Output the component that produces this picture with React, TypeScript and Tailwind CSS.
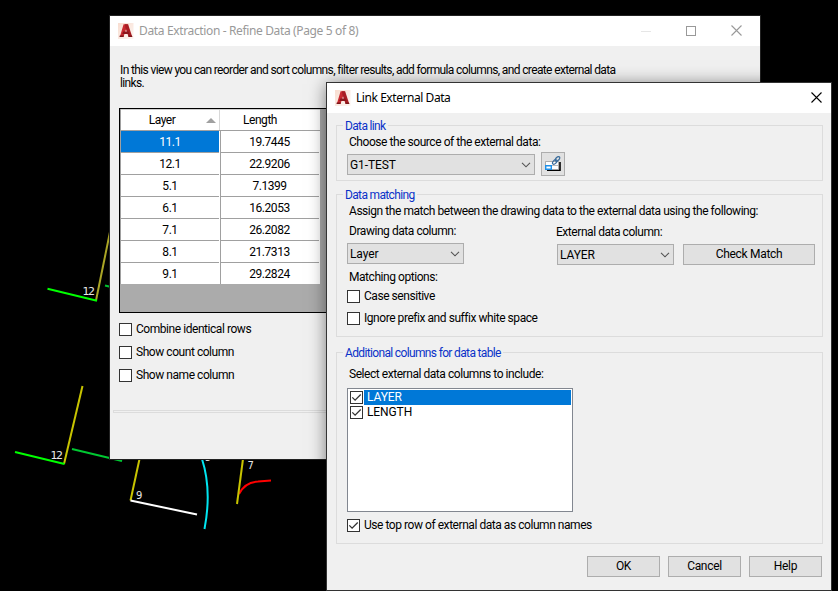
import type { ReactNode } from "react";
import clsx from "clsx";

type Row = { layer: string; length: string };

const rows: Row[] = [
  { layer: "11.1", length: "19.7445" },
  { layer: "12.1", length: "22.9206" },
  { layer: "5.1", length: "7.1399" },
  { layer: "6.1", length: "16.2053" },
  { layer: "7.1", length: "26.2082" },
  { layer: "8.1", length: "21.7313" },
  { layer: "9.1", length: "29.2824" },
];

function AppIcon() {
  return (
    <svg width="16" height="16" viewBox="0 0 16 16" className="shrink-0">
      <defs>
        <linearGradient id="iconBg" x1="0" y1="0" x2="1" y2="1">
          <stop offset="0" stopColor="#f8ddd0" />
          <stop offset="1" stopColor="#fdf5f1" />
        </linearGradient>
      </defs>
      <rect width="15.5" height="16" fill="url(#iconBg)" />
      <path d="M5.6 1.3h4.2L7 9.2 5.5 14H1.8z" fill="#c9292f" />
      <path d="M6.9 1.3h3.2l4.2 12.7h-3.7L7.4 4.6z" fill="#a81c22" />
      <path d="M5.3 8.4h5.2l1 2.7H4.2z" fill="#8c151b" />
      <path d="M1.8 12.4h4.1L5.4 14H1.5zM10.3 12.4h3.5l.6 1.6h-3.7z" fill="#7c1519" />
    </svg>
  );
}

function CloseIcon({ color }: { color: string }) {
  return (
    <svg width="11" height="11" viewBox="0 0 11 11" className="block shrink-0">
      <path d="M.5.5l10 10M10.5.5l-10 10" stroke={color} strokeWidth="1.1" fill="none" />
    </svg>
  );
}

function Label({ children, className }: { children: ReactNode; className?: string }) {
  return <div className={clsx("h-[14px] leading-[15px] whitespace-nowrap", className)}>{children}</div>;
}

function Box({ checked }: { checked?: boolean }) {
  return (
    <span className="block size-[13px] shrink-0 border border-[#333] bg-white">
      {checked && (
        <svg width="11" height="11" viewBox="0 0 11 11" className="block">
          <path d="M1.3 5.4l2.8 2.8 5.6-5.7" stroke="#333" strokeWidth="1.3" fill="none" />
        </svg>
      )}
    </span>
  );
}

function Check({ label, checked, className }: { label: string; checked?: boolean; className?: string }) {
  return (
    <div className={clsx("flex h-[13px] items-center gap-1 leading-[13px] whitespace-nowrap", className)}>
      <Box checked={checked} />
      <span>{label}</span>
    </div>
  );
}

function Select({ value, className }: { value: string; className?: string }) {
  return (
    <div
      className={clsx(
        "flex h-[21px] items-center justify-between border border-[#adadad] bg-[#e1e1e1] pr-[3px] pl-[2px]",
        className,
      )}
    >
      <span className="pt-px leading-[18px] tracking-[-0.1px]">{value}</span>
      <svg width="10" height="6" viewBox="0 0 10 6">
        <path d="M1 .8l4 4 4-4" stroke="#555" strokeWidth="1.1" fill="none" />
      </svg>
    </div>
  );
}

function Button({ children, className }: { children: ReactNode; className?: string }) {
  return (
    <button
      type="button"
      className={clsx("block h-[21px] border border-[#adadad] bg-[#e1e1e1] leading-[19px] tracking-[-0.3px]", className)}
    >
      {children}
    </button>
  );
}

function Group({ title, className, children }: { title: string; className: string; children: ReactNode }) {
  return (
    <fieldset className={clsx("border border-[#dcdcdc] pl-[10px]", className)}>
      <legend className="-ml-[4px] h-[13px] px-[2px] pt-px leading-[13px] tracking-[-0.65px] text-[#0a32c8]">{title}</legend>
      {children}
    </fieldset>
  );
}

// linework of the drawing area behind the dialogs
function Drawing() {
  return (
    <svg width="838" height="591" viewBox="0 0 838 591" fill="none" strokeWidth="2" className="absolute inset-0">
      <path d="M96 300.5L110 232" stroke="#aaa526" />
      <path d="M47.500 288.800L97 300.800" stroke="#00ff00" />
      <path d="M105 285.500L111 287" stroke="#00c030" />
      <path d="M82.500 386L64 464" stroke="#c8c400" />
      <path d="M15 452L64.500 464" stroke="#00ff00" />
      <path d="M72 449L122 461" stroke="#00c832" />
      <path d="M139.500 459L130.500 500.500" stroke="#c8c400" />
      <path d="M130.500 500.500L197 514.500" stroke="#fff" />
      <path d="M202 459Q212 490 204.500 529" stroke="#00e5f0" />
      <path d="M239 494Q245 482 258 481.500L271 480.500" stroke="#f00" />
      <path d="M243 459L237 504" stroke="#c8c400" />
      <g fill="#e8e8e8" fontSize="11" fontFamily="'DejaVu Sans', sans-serif" letterSpacing="0">
        <text x="82.500" y="295" textLength="12.500">12</text>
        <text x="50.500" y="458.500" textLength="12.500">12</text>
        <text x="136" y="498.500" fontSize="10">9</text>
        <text x="247.500" y="469" fontSize="10">7</text>
        <text x="204.500" y="460.500" fontSize="10">8</text>
      </g>
    </svg>
  );
}

function RefineWindow() {
  return (
    <section className="absolute top-[15px] left-[109px] h-[445px] w-[652px] border border-[#222] bg-[#f0f0f0]">
      <header className="flex h-[30px] items-center bg-white pl-2 text-[#999]">
        <AppIcon />
        <h1 className="ml-[5px] flex-1 font-['Noto_Sans',sans-serif] text-[12px] tracking-[-0.36px]">
          Data Extraction - Refine Data (Page 5 of 8)
        </h1>
        <span className="h-px w-[10px] bg-[#e6e6e6]" />
        <span className="ml-[35px] size-[10px] border border-[#999]" />
        <span className="mr-[18px] mb-px ml-[35px]">
          <CloseIcon color="#999" />
        </span>
      </header>

      <p className="mt-[18px] ml-[10px] leading-[13px] tracking-[-0.63px] whitespace-nowrap">
        In this view you can reorder and sort columns, filter results, add formula columns, and create external data
        <br />
        links.
      </p>

      <div className="mt-[18px] ml-[9px] h-[205px] border border-black bg-[#ababab]">
        <div className="w-[200px] border-l border-[#a0a0a0] bg-white text-center">
          <div className="flex h-[22px] border-t border-b border-t-[#d0d0d0] border-b-[#a0a0a0] leading-[20px]">
            <div className="relative w-[99px] border-r border-[#d8d8d8] pr-[16px]">
              Layer
              <span className="absolute top-[8px] right-[3px] border-x-[5px] border-b-[5px] border-x-transparent border-b-[#a0a0a0]" />
            </div>
            <div className="w-[100px] pr-[20px]">Length</div>
          </div>
          {rows.map((row, i) => (
            <div key={row.layer} className={clsx("flex leading-[22px]", i < rows.length - 1 ? "h-[22px]" : "h-[21px]")}>
              <div
                className={clsx(
                  "mr-px w-[98px]",
                  i < rows.length - 1 && "border-b border-[#a0a0a0]",
                  i === 0 && "bg-[#0078d7] text-white",
                )}
              >
                {row.layer}
              </div>
              <div className={clsx("w-[99px] border-l border-[#a0a0a0] pr-px", i < rows.length - 1 && "border-b")}>
                {row.length}
              </div>
            </div>
          ))}
        </div>
      </div>

      <div className="mt-[10px] ml-[9px] flex flex-col gap-[10px]">
        <Check label="Combine identical rows" />
        <Check label="Show count column" />
        <Check label="Show name column" />
      </div>
      <div className="mt-[28px] mr-[3px] ml-[3px] h-[3px] border border-[#dcdcdc]" />
    </section>
  );
}

function LinkWindow() {
  return (
    <section className="absolute top-[82px] left-[326px] h-[509px] w-[506px] border border-[#333] bg-[#f0f0f0] shadow-[0_2px_16px_rgba(0,0,0,0.5)]">
      <header className="flex h-[30px] items-center bg-white pr-[9px] pl-2">
        <AppIcon />
        <h2 className="ml-[5px] flex-1 font-['Noto_Sans',sans-serif] text-[12px] tracking-[-0.44px]">
          Link External Data
        </h2>
        <span className="mb-px">
          <CloseIcon color="#000" />
        </span>
      </header>

      <div className="pt-[6px] pr-[8px] pl-[9px]">
        <Group title="Data link" className="h-[62px]">
          <Label className="mt-[3px] ml-[2px]">Choose the source of the external data:</Label>
          <div className="mt-[3px] flex items-start gap-[6px]">
            <Select value="G1-TEST" className="mt-[2px] w-[188px]" />
            <button type="button" className="flex size-[24px] items-center justify-center border border-[#adadad] bg-[#e1e1e1]">
              <svg width="16" height="16" viewBox="0 0 16 16">
                <path d="M2 14.300h13V6" stroke="#000" strokeWidth="1.600" fill="none" />
                <path d="M.5 5.500h13v8H.5z" fill="#fff" stroke="#9a9a9a" strokeWidth=".8" />
                <path d="M.7 9.700h5.600v3.600H.7z" fill="#fff" stroke="#1e90e8" strokeWidth="1.400" />
                <path d="M7 9.500h6" stroke="#aaa" strokeWidth=".8" />
                <g stroke="#3d6e9c" strokeWidth="1.300" fill="none">
                  <ellipse cx="12.500" cy="2.900" rx="2.700" ry="1.600" transform="rotate(-45 12.500 2.900)" />
                  <ellipse cx="9.700" cy="6" rx="2.700" ry="1.600" transform="rotate(-45 9.700 6)" />
                </g>
              </svg>
            </button>
          </div>
        </Group>

        <Group title="Data matching" className="mt-[7px] h-[149px]">
          <Label className="mt-[3px] ml-[2px]">
            Assign the match between the drawing data to the external data using the following:
          </Label>
          <div className="mt-[6px] flex h-[41px]">
            <div className="w-[117px]">
              <Label className="ml-[2px]">Drawing data column:</Label>
              <Select value="Layer" className="mt-[5px]" />
            </div>
            <div className="mt-px ml-[93px] w-[117px]">
              <Label className="-ml-px">External data column:</Label>
              <Select value="LAYER" className="mt-[5px]" />
            </div>
            <Button className="mt-[20px] ml-[9px] w-[132px]">Check Match</Button>
          </div>
          <Label className="mt-[5px] ml-[2px]">Matching options:</Label>
          <Check label="Case sensitive" className="mt-[6px]" />
          <Check label="Ignore prefix and suffix white space" className="mt-[9px]" />
        </Group>

        <Group title="Additional columns for data table" className="mt-[9px] h-[198px]">
          <Label className="mt-[8px] ml-[2px]">Select external data columns to include:</Label>
          <ul className="mt-[7px] h-[124px] w-[226px] border border-[#828790] bg-white p-px">
            {["LAYER", "LENGTH"].map((name, i) => (
              <li key={name} className="flex h-[15px] items-center pl-px leading-[15px] tracking-[-0.1px]">
                <Box checked />
                <span className={clsx("ml-px flex-1 pl-[3px]", i === 0 && "bg-[#0078d7] text-white")}>{name}</span>
              </li>
            ))}
          </ul>
          <Check label="Use top row of external data as column names" checked className="mt-[7px]" />
        </Group>

        <footer className="mt-[12px] mr-px flex justify-end gap-2">
          <Button className="w-[73px]">OK</Button>
          <Button className="w-[73px]">Cancel</Button>
          <Button className="w-[73px]">Help</Button>
        </footer>
      </div>
    </section>
  );
}

export default function App() {
  return (
    <main className="relative h-[591px] w-[838px] overflow-hidden bg-black font-['Roboto',Arial,sans-serif] text-[12px] tracking-[-0.45px] text-black">
      <Drawing />
      <RefineWindow />
      <LinkWindow />
    </main>
  );
}
